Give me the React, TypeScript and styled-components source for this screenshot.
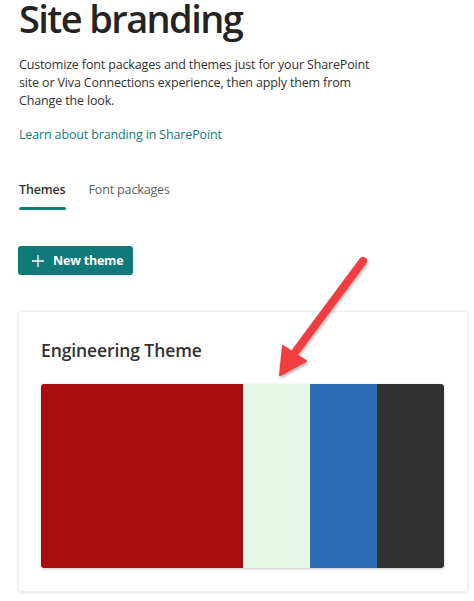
import styled, { createGlobalStyle } from "styled-components";

const GlobalStyle = createGlobalStyle`
  html, body {
    margin: 0;
    padding: 0;
    background: #ffffff;
  }
  body {
    font-family: "Open Sans", "Noto Sans", sans-serif;
    color: #323130;
  }
`;

const Page = styled.div`
  position: relative;
  width: 474px;
  height: 601px;
  overflow: hidden;
  box-sizing: border-box;
  padding: 0 6px 0 18px;
`;

const Title = styled.h1`
  margin: 0 0 0 1px;
  font-size: 38px;
  line-height: 36px;
  font-weight: 600;
  color: #252423;
  letter-spacing: -1.6px;
`;

const Description = styled.p`
  margin: 20px 0 0 1px;
  font-size: 12.5px;
  line-height: 18px;
  letter-spacing: -0.15px;
  color: #323130;
  width: 360px;
`;

const LearnLink = styled.a`
  display: block;
  margin: 16px 0 0 1px;
  font-size: 12.5px;
  line-height: 18px;
  letter-spacing: -0.15px;
  color: #0f7b7b;
  text-decoration: none;
`;

const TabBar = styled.div`
  display: flex;
  gap: 23px;
  margin: 37px 0 0 1px;
`;

const Tab = styled.div<{ $active?: boolean }>`
  display: flex;
  flex-direction: column;
  align-items: stretch;
  gap: 8px;
  font-size: 12.5px;
  line-height: 18px;
  letter-spacing: -0.15px;
  font-weight: ${(p) => (p.$active ? 600 : 400)};
  color: ${(p) => (p.$active ? "#323130" : "#605e5c")};

  &::after {
    content: "";
    height: 3px;
    border-radius: 2px;
    background: ${(p) => (p.$active ? "#0f7b7b" : "transparent")};
  }
`;

const NewButton = styled.button`
  display: flex;
  align-items: center;
  gap: 9px;
  margin-top: 36px;
  height: 29px;
  width: 115px;
  padding: 0 0 0 14px;
  border: none;
  border-radius: 3px;
  background: #10797a;
  color: #ffffff;
  font-family: "Open Sans", sans-serif;
  font-size: 12.5px;
  letter-spacing: -0.2px;
  font-weight: 700;
`;

const Card = styled.section`
  margin-top: 36px;
  width: 450px;
  box-sizing: border-box;
  padding: 25px 23px 23px 22px;
  border: 1px solid #efefef;
  border-radius: 3px;
  box-shadow: 0 1px 3px rgba(0, 0, 0, 0.12);
  display: flex;
  flex-direction: column;
  gap: 21px;
`;

const CardTitle = styled.h2`
  margin: 0;
  font-size: 17.5px;
  line-height: 26px;
  font-weight: 600;
  letter-spacing: -0.1px;
  color: #323130;
`;

const Palette = styled.div`
  height: 184px;
  display: flex;
  border-radius: 3px;
  overflow: hidden;
  box-shadow: 0 1px 3px rgba(0, 0, 0, 0.2);
`;

const Swatch = styled.div<{ $color: string; $grow: number }>`
  flex: ${(p) => p.$grow};
  background: ${(p) => p.$color};
`;

const ArrowOverlay = styled.svg`
  position: absolute;
  left: 0;
  top: 0;
  pointer-events: none;
`;

const swatches = [
  { color: "#a80c0c", grow: 3 },
  { color: "#e5f7e4", grow: 1 },
  { color: "#2b6cb3", grow: 1 },
  { color: "#323232", grow: 1 },
];

const PlusIcon = () => (
  <svg width="12" height="12" viewBox="0 0 12 12">
    <path d="M6 0v12M0 6h12" stroke="#fff" strokeWidth="1.3" />
  </svg>
);

export default function App() {
  return (
    <>
      <GlobalStyle />
      <Page>
        <Title>Site branding</Title>
        <Description>
          Customize font packages and themes just for your SharePoint site or
          Viva Connections experience, then apply them from Change the look.
        </Description>
        <LearnLink href="#">Learn about branding in SharePoint</LearnLink>
        <TabBar>
          <Tab $active>Themes</Tab>
          <Tab>Font packages</Tab>
        </TabBar>
        <NewButton>
          <PlusIcon />
          New theme
        </NewButton>
        <Card>
          <CardTitle>Engineering Theme</CardTitle>
          <Palette>
            {swatches.map((s) => (
              <Swatch key={s.color} $color={s.color} $grow={s.grow} />
            ))}
          </Palette>
        </Card>
        <ArrowOverlay width="474" height="601" viewBox="0 0 474 601">
          <defs>
            <filter id="shadow" x="-20%" y="-20%" width="140%" height="140%">
              <feDropShadow dx="1" dy="2" stdDeviation="1.5" floodColor="#000" floodOpacity="0.3" />
            </filter>
          </defs>
          <g filter="url(#shadow)" fill="#ef3d42" stroke="#ef3d42">
            <line x1="363" y1="261" x2="296" y2="351" strokeWidth="8" strokeLinecap="round" />
            <polygon points="280,375 283,346 306,361" strokeWidth="2" strokeLinejoin="round" />
          </g>
        </ArrowOverlay>
      </Page>
    </>
  );
}
